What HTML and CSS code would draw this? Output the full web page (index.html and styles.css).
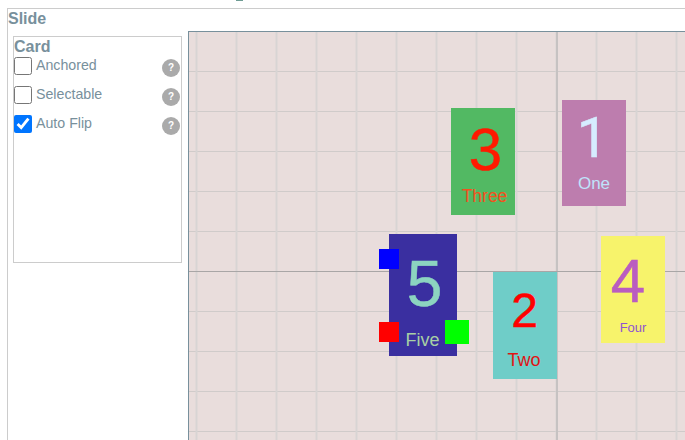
FILE: index.html
```html
<!DOCTYPE html>
<html lang="en">
<head>
<meta charset="utf-8">
<title>Slide</title>
<link rel="stylesheet" href="styles.css">
</head>
<body>
<div class="clip-mark"></div>
<main class="slide">
  <h1 class="slide-title">Slide</h1>
  <div class="slide-body">
    <aside class="props">
      <h2 class="props-title">Card</h2>
      <div class="prop"><input class="check" type="checkbox"><span class="prop-label">Anchored</span><span class="help">?</span></div>
      <div class="prop"><input class="check" type="checkbox"><span class="prop-label">Selectable</span><span class="help">?</span></div>
      <div class="prop"><input class="check" type="checkbox" checked><span class="prop-label">Auto Flip</span><span class="help">?</span></div>
    </aside>
    <section class="canvas">
      <div class="card card-one"><span class="digit">1</span><span class="label">One</span></div>
      <div class="card card-two"><span class="digit">2</span><span class="label">Two</span></div>
      <div class="card card-three"><span class="digit">3</span><span class="label">Three</span></div>
      <div class="card card-four"><span class="digit">4</span><span class="label">Four</span></div>
      <div class="card card-five"><span class="digit">5</span><span class="label">Five</span></div>
      <div class="handle handle-blue"></div>
      <div class="handle handle-red"></div>
      <div class="handle handle-green"></div>
    </section>
  </div>
</main>
</body>
</html>
```
FILE: styles.css
```css
html, body {
  margin: 0;
  height: 440px;
  overflow: hidden;
  background: #fff;
  font-family: "Liberation Sans", Arial, sans-serif;
}

.clip-mark {
  position: absolute;
  left: 236px;
  top: 0;
  width: 7px;
  height: 1px;
  background: #6f9c94;
}

.slide {
  margin: 8px 0 0 7px;
  height: 432px;
  box-sizing: border-box;
  border-top: 1px solid #ccc;
  border-left: 1px solid #ccc;
  display: flex;
  flex-direction: column;
}

.slide-title {
  margin: 0;
  padding-top: 1px;
  font-size: 16px;
  line-height: 18px;
  font-weight: bold;
  color: #78909c;
}

.slide-body {
  display: flex;
  align-items: flex-start;
  flex: 1;
  min-height: 0;
  padding: 3px 0 0 5px;
}

.props {
  width: 169px;
  height: 227px;
  margin-top: 5px;
  box-sizing: border-box;
  border: 1px solid #ccc;
  flex: none;
}

.props-title {
  margin: 0;
  font-size: 16px;
  line-height: 18px;
  font-weight: bold;
  color: #78909c;
  padding-top: 1px;
}

.prop {
  display: flex;
  align-items: flex-start;
  height: 29px;
  padding-right: 1px;
}

.check {
  width: 18px;
  height: 18px;
  margin: 1px 4px 0 0;
  flex: none;
}

.prop-label {
  flex: 1;
  padding-top: 1px;
  font-size: 14.2px;
  line-height: 16px;
  color: #78909c;
}

.help {
  width: 18px;
  height: 18px;
  margin-top: 3px;
  border-radius: 50%;
  background: #aaa;
  color: #fff;
  font-size: 10px;
  font-weight: bold;
  line-height: 18px;
  text-align: center;
  flex: none;
}

.canvas {
  position: relative;
  flex: 1;
  align-self: stretch;
  margin-left: 6px;
  border-top: 1px solid #78909c;
  border-left: 1px solid #78909c;
  overflow: hidden;
  background-color: #e9dddc;
  background-image:
    linear-gradient(#a9a6a6, #a9a6a6),
    linear-gradient(#c6c2c2, #c6c2c2),
    linear-gradient(to right, #d8d4d4 2px, transparent 2px),
    linear-gradient(#d0cbca 1.5px, transparent 1.5px);
  background-size: 100% 1px, 2px 100%, 40px 40px, 40px 40px;
  background-position: 0 239px, 366.5px 0, 6.5px 0, 0 39px;
  background-repeat: no-repeat, no-repeat, repeat, repeat;
}

.card {
  position: absolute;
  box-sizing: border-box;
  display: flex;
  flex-direction: column;
  align-items: center;
}

.digit {
  display: block;
  -webkit-text-stroke: 0.5px currentColor;
}

.label {
  display: block;
  line-height: 20px;
  font-size: 18px;
}

.card-one {
  left: 373px;
  top: 67.5px;
  width: 64px;
  height: 106.5px;
  background: #bd7dae;
  color: #d6ecff;
}
.card-one .digit { font-family: Roboto, sans-serif; font-size: 56px; line-height: 64px; margin-top: 6px; margin-left: -3px; }
.card-one .label { font-size: 17px; color: #bfe3fb; margin-top: 4px; }

.card-two {
  left: 304px;
  top: 239.5px;
  width: 64px;
  height: 107.5px;
  background: #6fcdc8;
  color: #ff0000;
}
.card-two .digit { font-size: 48px; line-height: 56px; margin-top: 11px; margin-left: -1px; }
.card-two .label { color: #e01414; margin-top: 11px; margin-left: -2px; }

.card-three {
  left: 262px;
  top: 76px;
  width: 64px;
  height: 107px;
  background: #52b963;
  color: #ff1a00;
}
.card-three .digit { font-size: 60px; line-height: 68px; margin-top: 8px; margin-left: 5px; }
.card-three .label { font-size: 17.5px; color: #f4511e; margin-top: 1.5px; margin-left: 3px; }

.card-four {
  left: 412px;
  top: 204px;
  width: 64px;
  height: 106.5px;
  background: #f7f36b;
  color: #ba5cc0;
}
.card-four .digit { font-size: 62px; line-height: 70px; margin-top: 9.5px; margin-left: -10px; }
.card-four .label { font-size: 13px; line-height: 16px; color: #8f55d0; margin-top: 4px; }

.card-five {
  left: 200px;
  top: 202px;
  width: 68px;
  height: 122px;
  background: #3a2fa0;
  color: #8cd4c0;
}
.card-five .digit { font-size: 64px; line-height: 72px; margin-top: 13.5px; margin-left: 3px; }
.card-five .label { color: #a8d0a4; margin-top: 10px; margin-left: -1px; }

.handle {
  position: absolute;
}

.handle-blue {
  left: 190px;
  top: 216.5px;
  width: 20px;
  height: 20px;
  background: #0000ff;
}

.handle-red {
  left: 190px;
  top: 289.5px;
  width: 20px;
  height: 20px;
  background: #ff0000;
}

.handle-green {
  left: 256px;
  top: 287.5px;
  width: 24px;
  height: 24px;
  background: #00ff00;
}
```
